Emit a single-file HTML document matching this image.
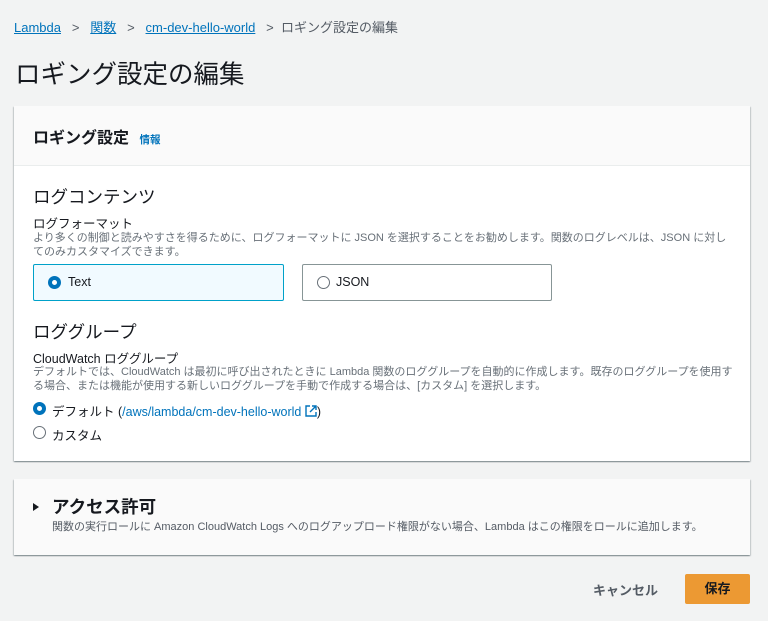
<!DOCTYPE html>
<html><head><meta charset="utf-8"><style>
*{margin:0;padding:0;box-sizing:border-box}
body{width:768px;height:621px;background:#f2f3f3;font-family:"Liberation Sans","Noto Sans CJK JP",sans-serif;color:#16191f;position:relative;overflow:hidden}
.a{position:absolute;white-space:nowrap}
a{color:#0073bb;text-decoration:underline}
.card{position:absolute;left:14px;width:736px;background:#fff;box-shadow:0 1px 1px rgba(0,28,36,.3),1px 1px 1px rgba(0,28,36,.15),-1px 1px 1px rgba(0,28,36,.15)}
.desc{font-size:11px;color:#687078;line-height:14px}
.rad{position:absolute;width:13px;height:13px;border-radius:50%;border:1px solid #687078;background:#fff}
.rad.on{border:4px solid #0073bb}
</style></head><body>
<div class="a" style="left:14px;top:17px;font-size:13px;color:#545b64"><a>Lambda</a>&nbsp;&nbsp;&nbsp;&gt;&nbsp;&nbsp;&nbsp;<a>関数</a>&nbsp;&nbsp;&nbsp;&gt;&nbsp;&nbsp;&nbsp;<a>cm-dev-hello-world</a>&nbsp;&nbsp;&nbsp;&gt;&nbsp;&nbsp;<span style="color:#545b64">ロギング設定の編集</span></div>
<div class="a" style="left:15px;top:54px;font-size:25.5px;color:#16191f">ロギング設定の編集</div>

<div class="card" style="top:106px;height:355px">
 <div style="height:60px;background:#fafafa;border-bottom:1px solid #eaeded"></div>
 <div class="a" style="left:19px;top:18px;font-size:16px;font-weight:bold">ロギング設定 <span style="font-size:10.5px;color:#0073bb;font-weight:bold;margin-left:6px">情報</span></div>
 <div class="a" style="left:19px;top:78px;font-size:17.5px">ログコンテンツ</div>
 <div class="a" style="left:19px;top:107px;font-size:12.5px">ログフォーマット</div>
 <div class="a desc" style="left:19px;top:125px">より多くの制御と読みやすさを得るために、ログフォーマットに JSON を選択することをお勧めします。関数のログレベルは、JSON に対し<br>てのみカスタマイズできます。</div>
 <div class="a" style="left:19px;top:158px;width:251px;height:37px;border:1px solid #00a1c9;background:#f1faff;border-radius:2px"></div>
 <div class="rad on" style="left:34px;top:170px"></div>
 <div class="a" style="left:54px;top:169px;font-size:12.5px">Text</div>
 <div class="a" style="left:288px;top:158px;width:250px;height:37px;border:1px solid #879596;border-radius:2px"></div>
 <div class="rad" style="left:303px;top:170px"></div>
 <div class="a" style="left:322px;top:169px;font-size:12.5px">JSON</div>
 <div class="a" style="left:19px;top:213px;font-size:17.5px">ロググループ</div>
 <div class="a" style="left:19px;top:242px;font-size:12.5px">CloudWatch ロググループ</div>
 <div class="a desc" style="left:19px;top:259px">デフォルトでは、CloudWatch は最初に呼び出されたときに Lambda 関数のロググループを自動的に作成します。既存のロググループを使用す<br>る場合、または機能が使用する新しいロググループを手動で作成する場合は、[カスタム] を選択します。</div>
 <div class="rad on" style="left:19px;top:296px"></div>
 <div class="a" style="left:38px;top:295px;font-size:12.5px">デフォルト (<span style="color:#0073bb">/aws/lambda/cm-dev-hello-world <svg width="12" height="12" viewBox="0 0 12 12" style="vertical-align:-1px"><path d="M5 1H1v10h10V7M7 1h4v4M11 1L5 7" fill="none" stroke="#0073bb" stroke-width="1.4"/></svg></span>)</div>
 <div class="rad" style="left:19px;top:320px"></div>
 <div class="a" style="left:38px;top:319px;font-size:12.5px">カスタム</div>
</div>

<div class="card" style="top:479px;height:76px;background:#fafafa">
 <div class="a" style="left:19px;top:24px;width:0;height:0;border-left:6px solid #16191f;border-top:4.5px solid transparent;border-bottom:4.5px solid transparent"></div>
 <div class="a" style="left:38px;top:15px;font-size:17.5px;font-weight:bold">アクセス許可</div>
 <div class="a desc" style="left:38px;top:41px;color:#545b64">関数の実行ロールに Amazon CloudWatch Logs へのログアップロード権限がない場合、Lambda はこの権限をロールに追加します。</div>
</div>

<div class="a" style="left:593px;top:580px;font-size:13px;font-weight:bold;color:#545b64">キャンセル</div>
<div class="a" style="left:685px;top:574px;width:65px;height:30px;background:#ec9933;border-radius:2px;font-size:13px;font-weight:bold;text-align:center;line-height:30px;color:#16191f">保存</div>
</body></html>
